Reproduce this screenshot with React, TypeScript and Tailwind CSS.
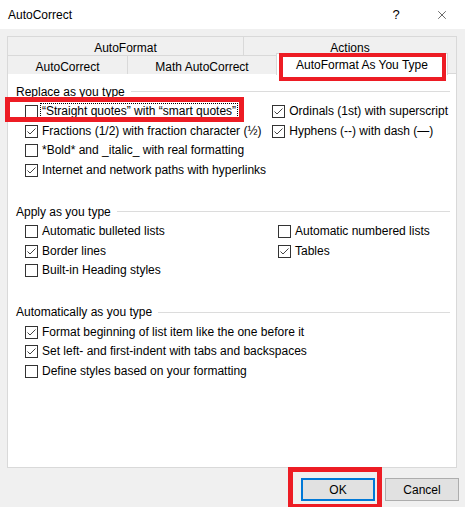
import { X } from "lucide-react";

type Item = { label: string; checked: boolean; focus?: boolean };

function Checkbox({ checked }: { checked: boolean }) {
  return (
    <span className="w-[13px] h-[13px] shrink-0 border border-[#333] bg-white flex items-center justify-center">
      {checked && (
        <svg width="11" height="11" viewBox="0 0 11 11">
          <polyline points="1.5,5.5 4,8 9.5,2.5" fill="none" stroke="#444" strokeWidth="1" />
        </svg>
      )}
    </span>
  );
}

function Option({ item }: { item: Item }) {
  return (
    <div className="h-[19.5px] flex items-center">
      <Checkbox checked={item.checked} />
      <span
        className={`ml-[2px] px-[1px] leading-[15px] whitespace-nowrap ${
          item.focus ? "border border-dotted border-black" : "border border-transparent"
        }`}
      >
        {item.label}
      </span>
    </div>
  );
}

function Group({
  title,
  left,
  right,
  className = "",
}: {
  title: string;
  left: Item[];
  right: Item[];
  className?: string;
}) {
  return (
    <div className={className}>
      <div className="h-[21px] flex items-center">
        <span className="whitespace-nowrap">{title}</span>
        <span className="flex-1 h-px bg-[#dcdcdc] ml-[6px]" />
      </div>
      <div className="flex pl-[9px]">
        <div className="w-[253px]">
          {left.map((it) => (
            <Option key={it.label} item={it} />
          ))}
        </div>
        <div className="flex-1">
          {right.map((it) => (
            <Option key={it.label} item={it} />
          ))}
        </div>
      </div>
    </div>
  );
}

export default function App() {
  return (
    <div
      className="relative w-[465px] h-[507px] bg-[#f0f0f0] text-[12px] text-black overflow-hidden"
      style={{ fontFamily: '"Segoe UI", "Liberation Sans", Arial, sans-serif' }}
    >
      {/* Title bar */}
      <div className="h-[29px] bg-white flex items-center pl-[8px]">
        <span className="flex-1 text-[12px]">AutoCorrect</span>
        <span className="w-[46px] text-center text-[13px]">?</span>
        <span className="w-[46px] flex justify-center">
          <X size={14} strokeWidth={1} />
        </span>
      </div>

      {/* Tabs */}
      <div className="pl-[7px] pt-[7px]">
        <div className="flex h-[19px] w-[450px]">
          <div className="w-[236px] border-t border-l border-[#d9d9d9] flex items-center justify-center pt-[3px]">
            AutoFormat
          </div>
          <div className="flex-1 border-t border-l border-r border-[#d9d9d9] flex items-center justify-center pt-[3px]">
            Actions
          </div>
        </div>
        <div className="flex h-[19px] w-[450px] border-r border-[#d9d9d9]">
          <div className="w-[120px] border-t border-l border-[#d9d9d9] flex items-center justify-center pt-[3px]">
            AutoCorrect
          </div>
          <div className="w-[149px] border-t border-l border-[#d9d9d9] flex items-center justify-center pt-[3px]">
            Math AutoCorrect
          </div>
          <div className="relative z-10 w-[172px] h-[22px] -mt-[2px] bg-white border-t border-l border-r border-[#d9d9d9] flex items-center justify-center pt-[1px]">
            AutoFormat As You Type
          </div>
          <div className="flex-1 border-b border-[#d9d9d9]" />
        </div>

        {/* Panel */}
        <div className="w-[450px] h-[394px] bg-white border border-t-0 border-[#d9d9d9] pl-[8px] pr-[6px] pt-[7px]">
          <Group
            title="Replace as you type"
            left={[
              { label: "\u201cStraight quotes\u201d with \u201csmart quotes\u201d", checked: false, focus: true },
              { label: "Fractions (1/2) with fraction character (\u00bd)", checked: true },
              { label: "*Bold* and _italic_ with real formatting", checked: false },
              { label: "Internet and network paths with hyperlinks", checked: true },
            ]}
            right={[
              { label: "Ordinals (1st) with superscript", checked: true },
              { label: "Hyphens (--) with dash (\u2014)", checked: true },
            ]}
          />
          <Group
            className="mt-[21px]"
            title="Apply as you type"
            left={[
              { label: "Automatic bulleted lists", checked: false },
              { label: "Border lines", checked: true },
              { label: "Built-in Heading styles", checked: false },
            ]}
            right={[
              { label: "Automatic numbered lists", checked: false },
              { label: "Tables", checked: true },
            ]}
          />
          <Group
            className="mt-[21px]"
            title="Automatically as you type"
            left={[
              { label: "Format beginning of list item like the one before it", checked: true },
              { label: "Set left- and first-indent with tabs and backspaces", checked: true },
              { label: "Define styles based on your formatting", checked: false },
            ]}
            right={[]}
          />
        </div>
      </div>

      {/* Buttons */}
      <div className="flex justify-end gap-[10px] pr-[6px] pt-[10px]">
        <button className="w-[74px] h-[23px] bg-[#e1e1e1] border-2 border-[#0078d7] text-[12px]">
          OK
        </button>
        <button className="w-[74px] h-[23px] bg-[#e1e1e1] border border-[#adadad] text-[12px]">
          Cancel
        </button>
      </div>

      {/* Red annotation boxes */}
      <div className="absolute z-20 left-[279px] top-[53px] w-[167px] h-[28px] border-[4px] border-[#ed1c24] pointer-events-none" />
      <div className="absolute z-20 left-[5px] top-[97px] w-[239px] h-[25px] border-[5px] border-[#ed1c24] pointer-events-none" />
      <div className="absolute z-20 left-[288px] top-[467px] w-[94px] h-[42px] border-[5px] border-[#ed1c24] pointer-events-none" />
    </div>
  );
}
